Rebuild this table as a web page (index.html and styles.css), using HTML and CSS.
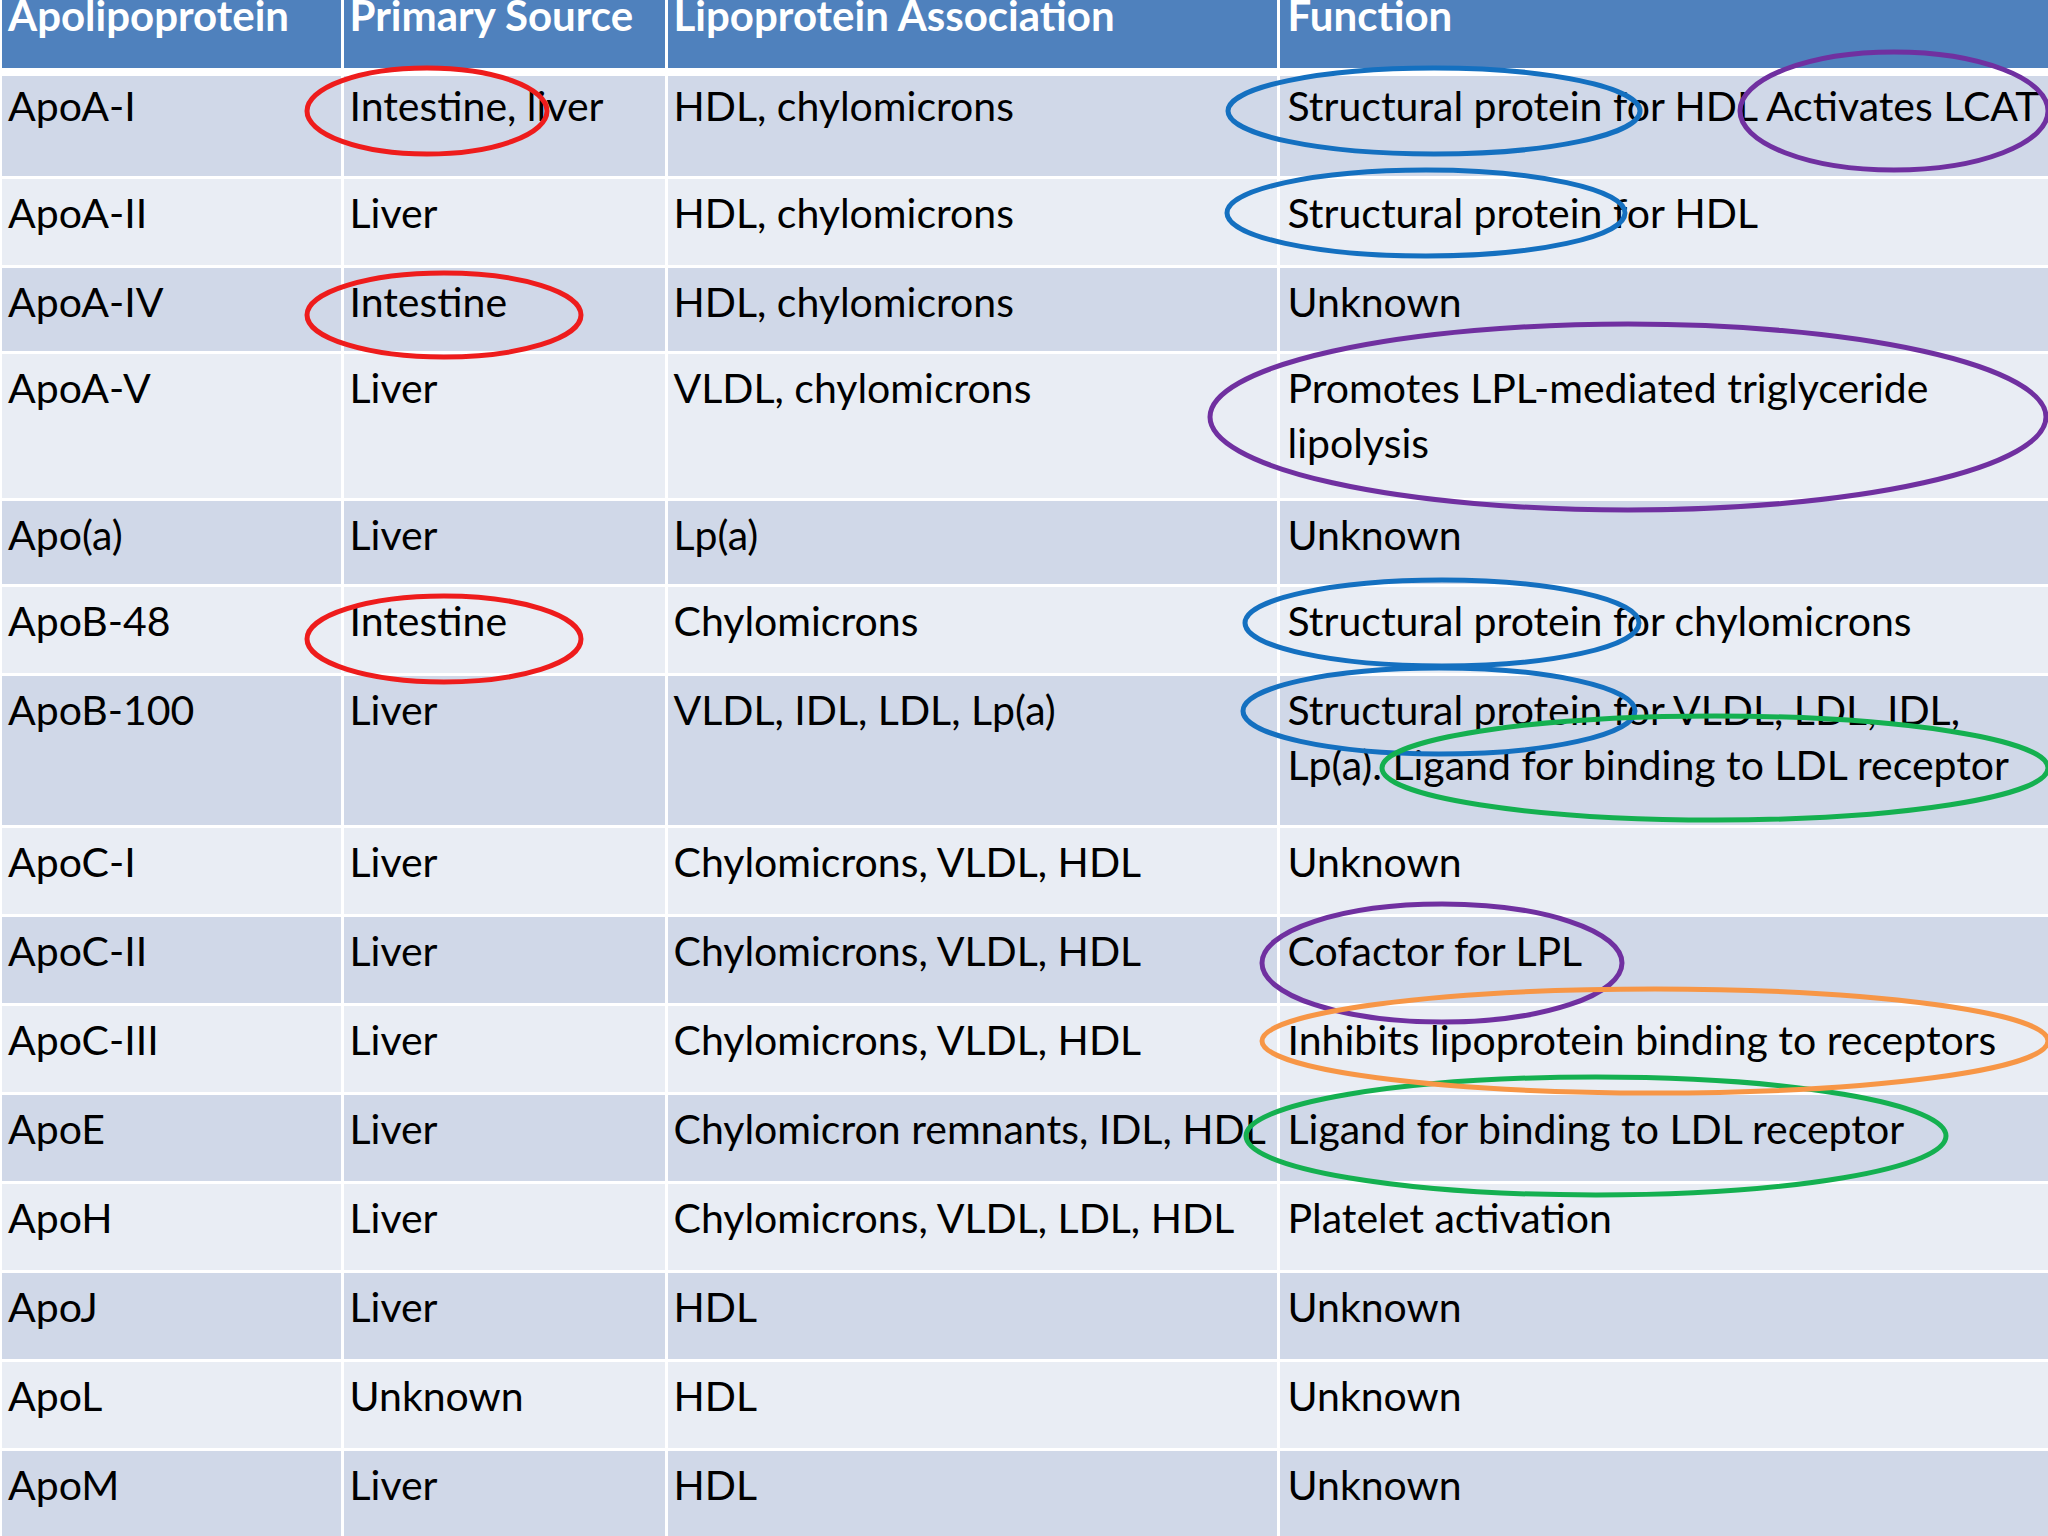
FILE: index.html
```html
<!DOCTYPE html>
<html>
<head>
<meta charset="utf-8">
<link rel="stylesheet" href="styles.css">
</head>
<body>
<div class="slide">
<table class="apo">
<colgroup>
<col class="c1"><col class="c2"><col class="c3"><col class="c4">
</colgroup>
<thead>
<tr class="head">
<th><div class="hd">Apolipoprotein</div></th>
<th><div class="hd">Primary Source</div></th>
<th><div class="hd">Lipoprotein Association</div></th>
<th><div class="hd">Function</div></th>
</tr>
</thead>
<tbody>
<tr class="dark first"><td>ApoA-I</td><td>Intestine, liver</td><td>HDL, chylomicrons</td><td class="nowrap">Structural protein for HDL Activates LCAT</td></tr>
<tr class="light tall"><td>ApoA-II</td><td>Liver</td><td>HDL, chylomicrons</td><td>Structural protein for HDL</td></tr>
<tr class="dark short"><td>ApoA-IV</td><td>Intestine</td><td>HDL, chylomicrons</td><td>Unknown</td></tr>
<tr class="light double"><td>ApoA-V</td><td>Liver</td><td>VLDL, chylomicrons</td><td>Promotes LPL-mediated triglyceride lipolysis</td></tr>
<tr class="dark short"><td>Apo(a)</td><td>Liver</td><td>Lp(a)</td><td>Unknown</td></tr>
<tr class="light tall"><td>ApoB-48</td><td>Intestine</td><td>Chylomicrons</td><td>Structural protein for chylomicrons</td></tr>
<tr class="dark double wide"><td>ApoB-100</td><td>Liver</td><td>VLDL, IDL, LDL, Lp(a)</td><td>Structural protein for VLDL, LDL, IDL, Lp(a). Ligand for binding to LDL receptor</td></tr>
<tr class="light tall"><td>ApoC-I</td><td>Liver</td><td>Chylomicrons, VLDL, HDL</td><td>Unknown</td></tr>
<tr class="dark tall"><td>ApoC-II</td><td>Liver</td><td>Chylomicrons, VLDL, HDL</td><td>Cofactor for LPL</td></tr>
<tr class="light tall"><td>ApoC-III</td><td>Liver</td><td>Chylomicrons, VLDL, HDL</td><td>Inhibits lipoprotein binding to receptors</td></tr>
<tr class="dark tall"><td>ApoE</td><td>Liver</td><td class="nowrap">Chylomicron remnants, IDL, HDL</td><td>Ligand for binding to LDL receptor</td></tr>
<tr class="light tall"><td>ApoH</td><td>Liver</td><td>Chylomicrons, VLDL, LDL, HDL</td><td>Platelet activation</td></tr>
<tr class="dark tall"><td>ApoJ</td><td>Liver</td><td>HDL</td><td>Unknown</td></tr>
<tr class="light tall"><td>ApoL</td><td>Unknown</td><td>HDL</td><td>Unknown</td></tr>
<tr class="dark last"><td>ApoM</td><td>Liver</td><td>HDL</td><td>Unknown</td></tr>
</tbody>
</table>
<svg class="marks" viewBox="0 0 2048 1536" width="2048" height="1536">
<g fill="none" stroke-width="5">
<ellipse class="red" cx="427" cy="111" rx="120" ry="43"/>
<ellipse class="red" cx="444" cy="315" rx="137" ry="42"/>
<ellipse class="red" cx="444" cy="639" rx="137" ry="43"/>
<ellipse class="blue" cx="1434" cy="111" rx="206" ry="43"/>
<ellipse class="blue" cx="1426" cy="213" rx="199" ry="43"/>
<ellipse class="blue" cx="1442" cy="623" rx="197" ry="43"/>
<ellipse class="blue" cx="1439" cy="711" rx="196" ry="43"/>
<ellipse class="purple" cx="1894" cy="111" rx="154" ry="59"/>
<ellipse class="purple" cx="1628" cy="417" rx="418" ry="93"/>
<ellipse class="purple" cx="1442" cy="963" rx="180" ry="59"/>
<ellipse class="green" cx="1715" cy="768" rx="333" ry="52"/>
<ellipse class="green" cx="1596" cy="1136" rx="350" ry="59"/>
<ellipse class="orange" cx="1655" cy="1041" rx="393" ry="52"/>
</g>
</svg>
</div>
</body>
</html>
```
FILE: styles.css
```css
html, body {
  margin: 0;
  padding: 0;
  background: #ffffff;
}
.slide {
  position: relative;
  width: 2048px;
  height: 1536px;
  overflow: hidden;
  font-family: Lato, "Open Sans", sans-serif;
}
.apo {
  width: 2048px;
  table-layout: fixed;
  border-collapse: collapse;
}
.c1 { width: 341px; }
.c2 { width: 324px; }
.c3 { width: 612px; }
.c4 { width: 771px; }
.apo th, .apo td {
  padding: 6px 6px 0 6px;
  vertical-align: top;
  text-align: left;
  border-left: 3px solid #ffffff;
  border-right: 3px solid #ffffff;
  color: #000000;
  font-size: 41px;
  line-height: 55px;
  font-weight: 400;
  overflow: visible;
}
.apo th:first-child, .apo td:first-child { border-left-width: 2px; }
.apo th:last-child, .apo td:last-child { padding-left: 8px; padding-right: 0; }
.head th {
  background: #4f81bd;
  color: #ffffff;
  font-weight: 700;
  height: 68px;
  padding-top: 0;
  border-bottom: 8px solid #ffffff;
  overflow: hidden;
}
.hd {
  margin-top: -6px;
  line-height: 42px;
  font-size: 42px;
  white-space: nowrap;
}
.apo td { height: 79px; border-bottom: 3px solid #ffffff; }
.first td { height: 98px; padding-top: 2px; }
.tall td { height: 80px; }
.short td { height: 77px; }
.double td { height: 138px; }
.wide td { height: 143px; }
.last td { border-bottom: 0; height: 80px; }
.dark td { background: #d0d8e8; }
.light td { background: #e9edf4; }
.nowrap { white-space: nowrap; }
.marks {
  position: absolute;
  left: 0;
  top: 0;
  pointer-events: none;
}
.red { stroke: #ee1c1c; }
.blue { stroke: #1470c0; }
.purple { stroke: #7030a0; }
.green { stroke: #14b050; }
.orange { stroke: #f79646; }
```
